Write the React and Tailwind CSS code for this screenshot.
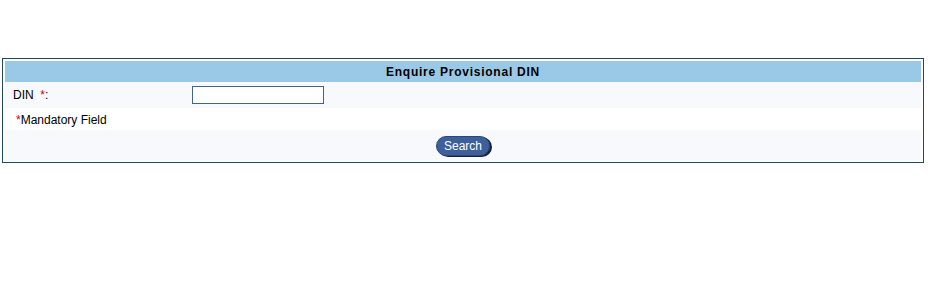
export default function App() {
  return (
    <div className="min-h-[284px] bg-white pt-[58px] pl-[2px]" style={{ fontFamily: '"Liberation Sans", Arial, sans-serif' }}>
      <div className="w-[922px] border border-[#1e4b63] px-[2px] pt-[2px] pb-[1px]">
        {/* header */}
        <div className="h-[21px] bg-[#9ac9e8] flex items-center justify-center">
          <span className="text-[12px] font-bold text-black tracking-[0.75px]">Enquire Provisional DIN</span>
        </div>

        {/* DIN row */}
        <div className="h-[26px] bg-[#f7f9fc] flex items-center">
          <div className="w-[187px] pl-[8px] text-[12px] text-black">
            DIN&nbsp; <span className="text-[#cc0000]">*</span>:
          </div>
          <input
            type="text"
            className="w-[132px] h-[18px] border border-[#41638f] bg-white outline-none px-1 text-[12px]"
          />
        </div>

        {/* mandatory note */}
        <div className="h-[22px] bg-white flex items-center pl-[11px] pt-[1px] text-[12px] text-black">
          <span className="text-[#cc0000]">*</span>Mandatory Field
        </div>

        {/* search */}
        <div className="h-[31px] bg-[#f7f9fc] flex items-center justify-center pt-[1px]">
          <button className="h-[20px] w-[54px] rounded-full bg-[#3d5f9c] text-white text-[12px] leading-none shadow-[2px_1px_0_#1a2233] border border-[#2c4878]">
            Search
          </button>
        </div>
      </div>
    </div>
  );
}
